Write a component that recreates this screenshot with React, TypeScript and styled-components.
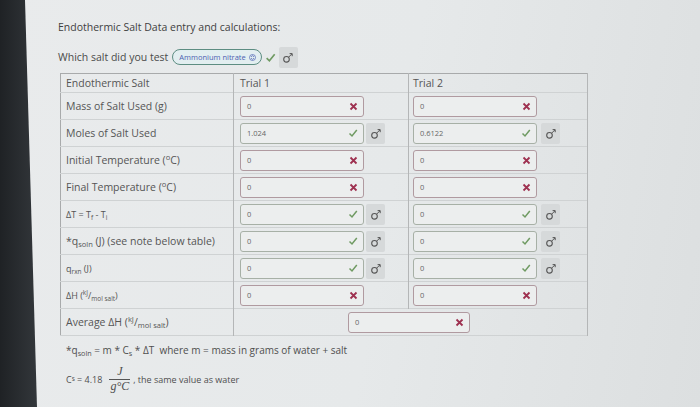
import React from 'react';
import styled, { createGlobalStyle } from 'styled-components';

const Global = createGlobalStyle`
  html, body { margin: 0; padding: 0; }
  body { font-family: "Open Sans", "Liberation Sans", sans-serif; }
`;

const Screen = styled.div`
  width: 700px;
  height: 407px;
  display: flex;
  overflow: hidden;
  background: linear-gradient(100deg, #e9ebec 0%, #e6e9ea 55%, #dcdfe0 100%);
`;

const Bezel = styled.div`
  width: 38px;
  flex-shrink: 0;
  background: linear-gradient(90deg, #1f2225, #33373b);
  clip-path: polygon(0 0, 25px 0, 37px 100%, 0 100%);
`;

const Page = styled.div`
  flex: 1;
  padding: 19px 0 0 20px;
  color: #555;
  font-size: 10.5px;
`;

const Title = styled.div`
  line-height: 16px;
  color: #3f3f3f;
`;

const SaltRow = styled.div`
  margin-top: 11px;
  height: 22px;
  display: flex;
  align-items: center;
  color: #4a4a4a;
`;

const Select = styled.div`
  margin-left: 4px;
  height: 14px;
  padding: 0 5px 0 6px;
  display: flex;
  align-items: center;
  gap: 3px;
  border: 1px solid #5d8d82;
  border-radius: 8px;
  background: #e2eef0;
  color: #4c5fb2;
  font-size: 7.5px;
`;

const KeyButton = styled.div<{ $ml?: number }>`
  width: 19px;
  height: 21px;
  margin-left: ${p => p.$ml ?? 2}px;
  flex-shrink: 0;
  border-radius: 2px;
  background: #d6d9da;
  display: flex;
  align-items: center;
  justify-content: center;
`;

const Table = styled.table`
  margin-top: 5px;
  margin-left: 2px;
  border-collapse: collapse;
  width: 527px;
  border: 1px solid #a8aaab;
  table-layout: fixed;
`;

const Row = styled.tr<{ $head?: boolean }>`
  height: ${p => (p.$head ? 19 : 27)}px;
  border-bottom: 1px solid #cfd2d3;
`;

const Cell = styled.td<{ $w?: number; $pl?: number }>`
  box-sizing: border-box;
  ${p => (p.$w ? `width: ${p.$w}px;` : '')}
  padding: 0 0 0 ${p => p.$pl ?? 5}px;
  border-right: 1px solid #b4b6b7;
  vertical-align: middle;
  white-space: nowrap;
  line-height: 14px;
`;

const Wrap = styled.div<{ $center?: boolean }>`
  display: flex;
  align-items: center;
  ${p => (p.$center ? 'justify-content: center; padding-right: 8px;' : '')}
`;

const Field = styled.div<{ $ok: boolean; $w?: number }>`
  width: ${p => p.$w ?? 124}px;
  height: 21px;
  box-sizing: border-box;
  padding: 0 5px 0 6px;
  display: flex;
  align-items: center;
  justify-content: space-between;
  border: 1px solid ${p => (p.$ok ? '#a7b0a6' : '#b09aa0')};
  border-radius: 3px;
  background: #eceeee;
  color: #666;
  font-size: 7.5px;
`;

const Note = styled.div`
  margin-top: 7px;
  padding-left: 8px;
  line-height: 14px;
  color: #4f4f4f;
  font-size: 10px;
`;

const Formula = styled.div`
  margin-top: 8px;
  padding-left: 8px;
  display: flex;
  align-items: center;
  color: #4f4f4f;
  font-size: 9px;
`;

const Frac = styled.span`
  display: inline-flex;
  flex-direction: column;
  align-items: center;
  margin: 0 3px 0 7px;
  font-family: "Liberation Serif", serif;
  font-style: italic;
  font-size: 12px;
  line-height: 13px;
`;

const Num = styled.span`
  align-self: stretch;
  text-align: center;
  padding-bottom: 1px;
  border-bottom: 1px solid #555;
`;

const Den = styled.span`
  padding: 0 1px;
`;

const Sub = styled.sub`
  font-size: 0.72em;
  vertical-align: -2px;
  line-height: 0;
`;

const Sup = styled.sup`
  font-size: 0.72em;
  vertical-align: 4px;
  line-height: 0;
`;

const Small = styled.span`
  font-size: 9px;
`;

const Check = ({ size = 10 }: { size?: number }) => (
  <svg width={size} height={size} viewBox="0 0 10 10">
    <polyline points="1.5,5.5 4,8 8.8,2" fill="none" stroke="#6f9a62" strokeWidth="1.5" />
  </svg>
);

const Cross = () => (
  <svg width="9" height="9" viewBox="0 0 9 9">
    <path d="M1.5 1.5 L7.5 7.5 M7.5 1.5 L1.5 7.5" stroke="#9e3150" strokeWidth="1.8" />
  </svg>
);

const KeyIcon = () => (
  <svg width="12" height="13" viewBox="0 0 12 13">
    <circle cx="4.5" cy="8.3" r="2.8" fill="none" stroke="#555" strokeWidth="1.1" />
    <path d="M6.6 6.2 L10 2.8 M7.6 2.6 L10.2 2.6 L10.2 5.2" fill="none" stroke="#555" strokeWidth="1" />
  </svg>
);

const Updown = () => (
  <svg width="7" height="7" viewBox="0 0 7 7">
    <circle cx="3.5" cy="3.5" r="3" fill="none" stroke="#4c5fb2" strokeWidth="0.7" />
    <path d="M2 3 L3.5 1.6 L5 3 M2 4 L3.5 5.4 L5 4" fill="none" stroke="#4c5fb2" strokeWidth="0.7" />
  </svg>
);

type Entry = { v: string; ok: boolean };

const Input = ({ e, gap }: { e: Entry; gap?: number }) => (
  <Wrap>
    <Field $ok={e.ok}>
      <span>{e.v}</span>
      {e.ok ? <Check /> : <Cross />}
    </Field>
    {e.ok && (
      <KeyButton $ml={gap}>
        <KeyIcon />
      </KeyButton>
    )}
  </Wrap>
);

const rows: { label: React.ReactNode; t1: Entry; t2: Entry }[] = [
  { label: 'Mass of Salt Used (g)', t1: { v: '0', ok: false }, t2: { v: '0', ok: false } },
  { label: 'Moles of Salt Used', t1: { v: '1.024', ok: true }, t2: { v: '0.6122', ok: true } },
  {
    label: <>Initial Temperature (<Sup>o</Sup>C)</>,
    t1: { v: '0', ok: false },
    t2: { v: '0', ok: false },
  },
  {
    label: <>Final Temperature (<Sup>o</Sup>C)</>,
    t1: { v: '0', ok: false },
    t2: { v: '0', ok: false },
  },
  {
    label: <Small>ΔT = T<Sub>f</Sub> - T<Sub>i</Sub></Small>,
    t1: { v: '0', ok: true },
    t2: { v: '0', ok: true },
  },
  {
    label: <>*q<Sub>soln</Sub> (J) (see note below table)</>,
    t1: { v: '0', ok: true },
    t2: { v: '0', ok: true },
  },
  {
    label: <Small>q<Sub>rxn</Sub> (J)</Small>,
    t1: { v: '0', ok: true },
    t2: { v: '0', ok: true },
  },
  {
    label: <Small>ΔH (<Sup>kJ</Sup>/<Sub>mol salt</Sub>)</Small>,
    t1: { v: '0', ok: false },
    t2: { v: '0', ok: false },
  },
];

export default function App() {
  return (
    <>
      <Global />
      <Screen>
        <Bezel />
        <Page>
          <Title>Endothermic Salt Data entry and calculations:</Title>
          <SaltRow>
            Which salt did you test
            <Select>
              Ammonium nitrate <Updown />
            </Select>
            <span style={{ marginLeft: 3, display: 'flex' }}>
              <Check size={11} />
            </span>
            <KeyButton $ml={3}>
              <KeyIcon />
            </KeyButton>
          </SaltRow>
          <Table>
            <tbody>
              <Row $head>
                <Cell $w={173}>Endothermic Salt</Cell>
                <Cell $w={175} $pl={6}>Trial 1</Cell>
                <Cell $w={179} $pl={4}>Trial 2</Cell>
              </Row>
              {rows.map((r, i) => (
                <Row key={i}>
                  <Cell>{r.label}</Cell>
                  <Cell $pl={6}>
                    <Input e={r.t1} />
                  </Cell>
                  <Cell $pl={4}>
                    <Input e={r.t2} gap={4} />
                  </Cell>
                </Row>
              ))}
              <Row>
                <Cell>
                  Average ΔH (<Sup>kJ</Sup>/<Sub>mol salt</Sub>)
                </Cell>
                <Cell colSpan={2}>
                  <Wrap $center>
                    <Field $ok={false} $w={122}>
                      <span>0</span>
                      <Cross />
                    </Field>
                  </Wrap>
                </Cell>
              </Row>
            </tbody>
          </Table>
          <Note>
            *q<Sub>soln</Sub> = m * C<Sub>s</Sub> * ΔT &nbsp;where m = mass in grams of water + salt
          </Note>
          <Formula>
            C<Sub>s</Sub>&nbsp;= 4.18
            <Frac>
              <Num>J</Num>
              <Den>g°C</Den>
            </Frac>
            , the same value as water
          </Formula>
        </Page>
      </Screen>
    </>
  );
}
